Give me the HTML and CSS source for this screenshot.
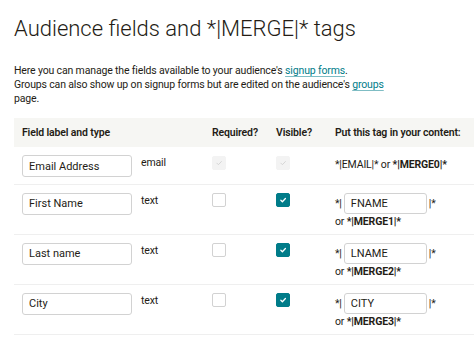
FILE: index.html
```html
<!DOCTYPE html>
<html>
<head>
    <title>Audience fields and *|MERGE|* tags</title>
    <link rel="stylesheet" href="styles.css">
</head>
<body>
    <div class="page">
        <h1>Audience fields and *|MERGE|* tags</h1>
        <p class="intro">
            Here you can manage the fields available to your audience's <a href="#">signup forms</a>.<br>
            Groups can also show up on signup forms but are edited on the audience's <a href="#">groups</a> page.
        </p>

        <table class="fields">
            <thead>
                <tr>
                    <th class="col-label">Field label and type</th>
                    <th class="col-req">Required?</th>
                    <th class="col-vis">Visible?</th>
                    <th class="col-tag">Put this tag in your content:</th>
                </tr>
            </thead>
            <tbody>
                <tr class="row-email">
                    <td>
                        <div class="label-cell">
                            <input type="text" class="field-input" value="Email Address">
                            <span class="field-type">email</span>
                        </div>
                    </td>
                    <td><span class="check disabled"><svg viewBox="0 0 14 14"><path d="M4.5 7.2 L6.3 9 L9.8 5.3"/></svg></span></td>
                    <td><span class="check disabled"><svg viewBox="0 0 14 14"><path d="M4.5 7.2 L6.3 9 L9.8 5.3"/></svg></span></td>
                    <td><div class="tag-static">*|EMAIL|* or <b>*|MERGE0|*</b></div></td>
                </tr>
                <tr>
                    <td>
                        <div class="label-cell">
                            <input type="text" class="field-input" value="First Name">
                            <span class="field-type">text</span>
                        </div>
                    </td>
                    <td><span class="check"></span></td>
                    <td><span class="check checked"><svg viewBox="0 0 14 14"><path d="M4.5 7.2 L6.3 9 L9.8 5.3"/></svg></span></td>
                    <td>
                        <div class="tag-edit">*| <input type="text" class="tag-input" value="FNAME"> |*</div>
                        <div class="tag-alt">or <b>*|MERGE1|*</b></div>
                    </td>
                </tr>
                <tr>
                    <td>
                        <div class="label-cell">
                            <input type="text" class="field-input" value="Last name">
                            <span class="field-type">text</span>
                        </div>
                    </td>
                    <td><span class="check"></span></td>
                    <td><span class="check checked"><svg viewBox="0 0 14 14"><path d="M4.5 7.2 L6.3 9 L9.8 5.3"/></svg></span></td>
                    <td>
                        <div class="tag-edit">*| <input type="text" class="tag-input" value="LNAME"> |*</div>
                        <div class="tag-alt">or <b>*|MERGE2|*</b></div>
                    </td>
                </tr>
                <tr>
                    <td>
                        <div class="label-cell">
                            <input type="text" class="field-input" value="City">
                            <span class="field-type">text</span>
                        </div>
                    </td>
                    <td><span class="check"></span></td>
                    <td><span class="check checked"><svg viewBox="0 0 14 14"><path d="M4.5 7.2 L6.3 9 L9.8 5.3"/></svg></span></td>
                    <td>
                        <div class="tag-edit">*| <input type="text" class="tag-input" value="CITY"> |*</div>
                        <div class="tag-alt">or <b>*|MERGE3|*</b></div>
                    </td>
                </tr>
            </tbody>
        </table>
    </div>
</body>
</html>
```

FILE: styles.css
```css
* {
    margin: 0;
    padding: 0;
    box-sizing: border-box;
}

body {
    font-family: Roboto, 'Liberation Sans', sans-serif;
    color: #241c15;
    background: #fff;
    font-size: 10.5px;
    letter-spacing: -0.15px;
    overflow: hidden;
}

.page {
    padding: 15px 0 0 14px;
}

h1 {
    font-size: 22px;
    font-weight: 300;
    line-height: 28px;
    letter-spacing: 0;
    margin-bottom: 21px;
}

.intro {
    max-width: 390px;
    line-height: 14px;
    margin-bottom: 12px;
}

.intro a {
    color: #007c89;
    text-decoration: underline;
    text-decoration-color: #7fbdc4;
    text-underline-offset: 2px;
}

.fields {
    width: 460px;
    border-collapse: collapse;
    table-layout: fixed;
}

.fields th {
    background: #f6f6f3;
    font-weight: 600;
    text-align: left;
    height: 29px;
    padding: 0 8px;
    white-space: nowrap;
}

.col-label { width: 190px; }
.col-req { width: 64px; }
.col-vis { width: 59px; }

.fields td {
    vertical-align: top;
    padding: 8px 8px 0;
    height: 50px;
    border-bottom: 1px solid #efefef;
}

.fields .row-email td {
    height: 37px;
}

.label-cell {
    display: flex;
    align-items: flex-start;
    gap: 9px;
}

.field-input {
    width: 110px;
    height: 22px;
    border: 1px solid #d2d2d2;
    border-radius: 3px;
    padding: 0 6px;
    font: inherit;
    font-size: 11px;
    color: #241c15;
}

.field-type {
    padding-top: 1px;
}

.check {
    display: block;
    width: 14px;
    height: 14px;
    border: 1px solid #d2d2d2;
    border-radius: 2px;
    background: #fff;
}

.check svg {
    display: block;
    width: 12px;
    height: 12px;
    fill: none;
    stroke-width: 1.5;
    stroke-linecap: round;
    stroke-linejoin: round;
}

.check.disabled {
    background: #f3f3f3;
    border-color: #f3f3f3;
    margin-top: 1px;
}

.check.disabled svg {
    stroke: #d0d0d0;
    stroke-width: 1;
}

.check.checked {
    background: #007c89;
    border-color: #007c89;
}

.check.checked svg {
    stroke: #fff;
}

.tag-static {
    padding-top: 3px;
}

.tag-edit {
    display: flex;
    align-items: center;
    gap: 2px;
    white-space: nowrap;
}

.tag-input {
    width: 83px;
    height: 21px;
    border: 1px solid #d2d2d2;
    border-radius: 3px;
    padding: 0 6px;
    font: inherit;
    font-size: 11px;
    color: #241c15;
}

.tag-alt {
    line-height: 16px;
}
```
